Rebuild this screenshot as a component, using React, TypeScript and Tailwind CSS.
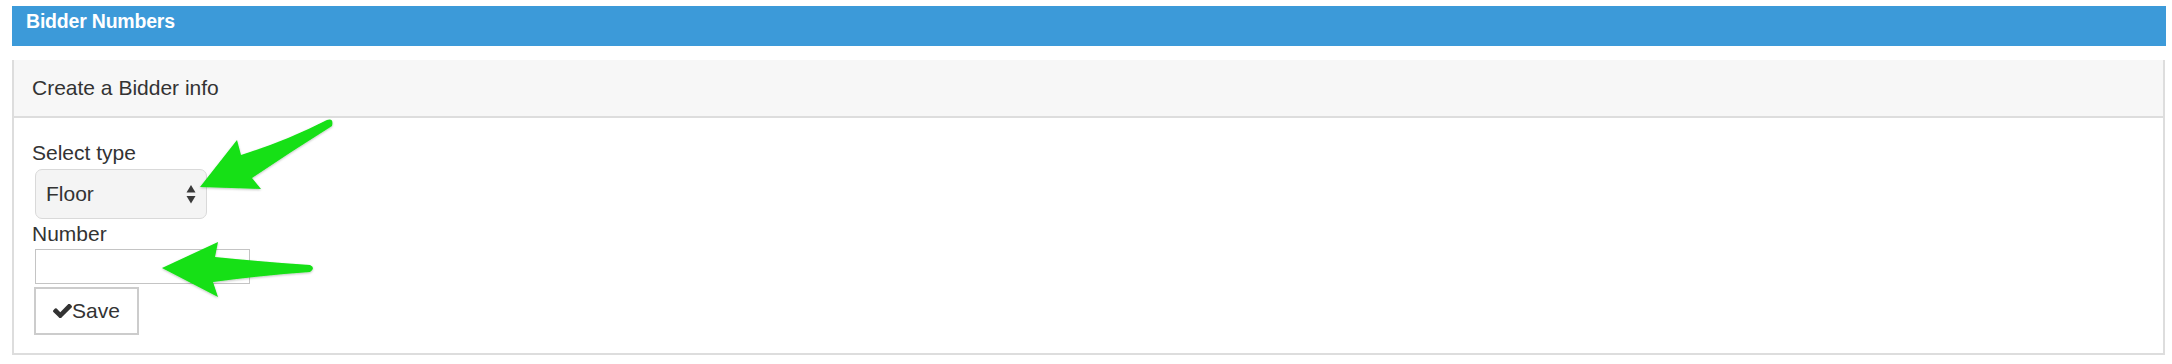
import { useState } from 'react';

const font = { fontFamily: '"Liberation Sans", Arial, Helvetica, sans-serif' };

const CheckIcon = () => (
  <svg width="19" height="14" viewBox="121 362 1550 1124" className="shrink-0" aria-hidden="true">
    <path
      fill="#333333"
      d="M1671 566q0 40-28 68l-724 724-136 136q-28 28-68 28t-68-28l-136-136-362-362q-28-28-28-68t28-68l136-136q28-28 68-28t68 28l294 295 656-657q28-28 68-28t68 28l136 136q28 28 28 68z"
    />
  </svg>
);

const SelectArrows = () => (
  <svg width="10" height="19" viewBox="0 0 10 19" aria-hidden="true">
    <path d="M5 0 L9.5 7.5 L0.5 7.5 Z" fill="#3a3a3a" />
    <path d="M0.5 11 L9.5 11 L5 18.5 Z" fill="#3a3a3a" />
  </svg>
);

// green annotation arrows drawn over the form
const Annotations = () => (
  <svg
    className="absolute inset-0 pointer-events-none"
    width="2172"
    height="364"
    viewBox="0 0 2172 364"
    aria-hidden="true"
  >
    <defs>
      <filter id="soft" x="-20%" y="-20%" width="140%" height="140%">
        <feDropShadow dx="0" dy="1" stdDeviation="1.2" floodColor="#000" floodOpacity="0.25" />
      </filter>
    </defs>
    <g fill="#14e014" filter="url(#soft)">
      <path d="M200 187 L237 140 L241 155 Q286 141 327 120 Q334 118 332 126 Q292 151 252 178 L261 189 Z" />
      <path d="M162 268 L218 242 L215 257 Q264 262 310 265 Q316 268 310 272 Q264 275 213 282 L218 297 Z" />
    </g>
  </svg>
);

export default function App() {
  const [number, setNumber] = useState('');

  return (
    <div className="relative w-[2172px] h-[364px] bg-white text-[#333333]" style={font}>
      <div className="px-[12px] pt-[6px] pr-[6px]">
        <div className="h-[40px] bg-[#3c9ad9] pl-[14px] pt-[3px]">
          <span className="text-[19.5px] leading-[24px] font-bold text-white tracking-[-0.2px]">Bidder Numbers</span>
        </div>

        <div className="mt-[14px] mr-[1px] border-x-2 border-b-2 border-[#dddddd]">
          <div className="h-[58px] flex items-center px-[18px] bg-[#f7f7f7] border-b-2 border-[#dddddd]">
            <h3 className="text-[21px] leading-[30px]">Create a Bidder info</h3>
          </div>

          <div className="px-[18px] pt-[20px] pb-[18px]">
            <label className="block text-[21px] leading-[30px] mb-px">Select type</label>
            <div className="ml-[3px] w-[172px] h-[50px] flex items-center justify-between pl-[10px] pr-[10px] rounded-[7px] border border-[#d9d9d9] bg-[#f4f4f4]">
              <span className="text-[21px] leading-[30px]">Floor</span>
              <SelectArrows />
            </div>

            <label className="block text-[21px] leading-[30px]">Number</label>
            <input
              value={number}
              onChange={e => setNumber(e.target.value)}
              className="block ml-[3px] w-[215px] h-[35px] border border-[#c4c4c4] bg-white px-2 text-[21px] outline-none"
            />

            <button className="mt-[3px] ml-[2px] w-[105px] h-[48px] flex items-center justify-center border-2 border-[#cccccc] bg-white text-[21px] leading-[30px]">
              <CheckIcon />
              <span>Save</span>
            </button>
          </div>
        </div>
      </div>

      <Annotations />
    </div>
  );
}
